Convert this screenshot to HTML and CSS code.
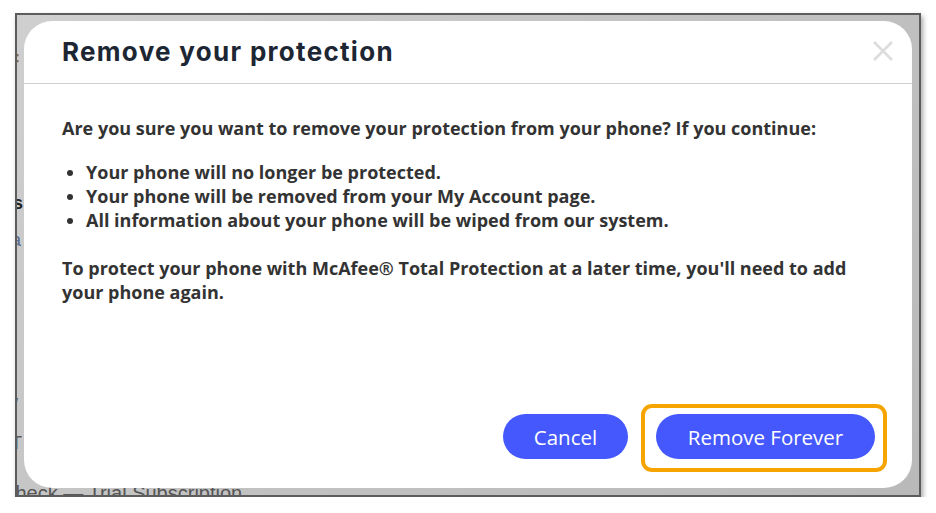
FILE: index.html
```html
<!DOCTYPE html>
<html lang="en">
<head>
<meta charset="utf-8">
<title>Remove your protection</title>
<link rel="stylesheet" href="styles.css">
</head>
<body>
<div class="frame">
  <div class="page">
    <div class="pg-line pg-f">f</div>
    <div class="pg-line pg-s">s</div>
    <div class="pg-line pg-a">a</div>
    <div class="pg-line pg-slash">/</div>
    <div class="pg-line pg-t">T</div>
    <div class="pg-line pg-bottom">Check — Trial Subscription</div>
  </div>
  <div class="modal" role="dialog" aria-labelledby="mtitle">
    <div class="modal-header">
      <h1 id="mtitle" class="modal-title">Remove your protection</h1>
      <button class="close" aria-label="Close">
        <svg width="22" height="22" viewBox="0 0 22 22"><path d="M2 2L20 20M20 2L2 20" stroke="#dcdcdc" stroke-width="2.6" fill="none"/></svg>
      </button>
    </div>
    <div class="modal-body">
      <p class="lead">Are you sure you want to remove your protection from your phone? If you continue:</p>
      <ul class="list">
        <li>Your phone will no longer be protected.</li>
        <li>Your phone will be removed from your My Account page.</li>
        <li>All information about your phone will be wiped from our system.</li>
      </ul>
      <p class="note">To protect your phone with McAfee® Total Protection at a later time, you'll need to add your phone again.</p>
    </div>
    <div class="modal-footer">
      <button class="btn">Cancel</button>
      <div class="highlight-wrap">
        <button class="btn btn-wide">Remove Forever</button>
        <span class="highlight"></span>
      </div>
    </div>
  </div>
</div>
</body>
</html>
```

FILE: styles.css
```css
html, body {
  margin: 0;
  padding: 0;
  background: #ffffff;
}

body {
  font-family: "Open Sans", "Liberation Sans", sans-serif;
}

.frame {
  position: relative;
  margin: 13px 0 0 15px;
  width: 906px;
  height: 484px;
  box-sizing: border-box;
  border: 2px solid #5c5c5c;
  background: linear-gradient(135deg, #cfcfcf 0%, #c2c2c2 50%, #b9b9b9 100%);
  box-shadow: 2px 3px 5px rgba(0, 0, 0, 0.35);
  overflow: hidden;
}

.page {
  display: flex;
  flex-direction: column;
  color: #4a4a4a;
  font-family: "Liberation Sans", sans-serif;
}

.pg-line {
  font-size: 18px;
  line-height: 20px;
  height: 20px;
  white-space: nowrap;
}

.pg-f { margin-top: 33px; color: #8a6a3a; margin-left: -8px; font-size: 34px; line-height: 36px; height: 36px; }
.pg-s { margin-top: 109px; color: #222; font-weight: 700; margin-left: -4px; }
.pg-a { margin-top: 17px; color: #5a6a90; margin-left: -6px; }
.pg-slash { margin-top: 145px; color: #5a5a5a; margin-left: -4px; }
.pg-t { margin-top: 18px; color: #5a5a5a; margin-left: -6px; }
.pg-bottom { margin-top: 30px; margin-left: -16px; font-size: 20px; color: #555; }

.modal {
  position: absolute;
  left: 7px;
  top: 6px;
  width: 888px;
  height: 467px;
  background: #ffffff;
  border-radius: 28px;
  display: flex;
  flex-direction: column;
  overflow: hidden;
}

.modal-header {
  height: 63px;
  box-sizing: border-box;
  border-bottom: 1px solid #cfcfcf;
  display: flex;
  align-items: center;
  justify-content: space-between;
  padding: 0 18px 0 38px;
}

.modal-title {
  margin: 0;
  font-family: "Inter", "Liberation Sans", sans-serif;
  font-weight: 700;
  font-size: 26px;
  letter-spacing: 1.3px;
  color: #1d2633;
  padding-bottom: 2px;
}

.close {
  border: 0;
  background: none;
  padding: 0;
  width: 22px;
  height: 22px;
  margin-top: -2px;
  display: flex;
}

.modal-body {
  flex: 1;
  padding: 32px 38px 0 38px;
  color: #333333;
  font-size: 18px;
  line-height: 24px;
  font-weight: 700;
}

.lead, .note {
  margin: 0;
}

.list {
  margin: 20px 0 24px 0;
  padding: 0 0 0 24px;
}

.modal-footer {
  display: flex;
  justify-content: flex-end;
  gap: 28px;
  padding: 0 37px 29px 0;
}

.btn {
  height: 45px;
  width: 125px;
  border: 0;
  border-radius: 23px;
  background: #4458fd;
  color: #ffffff;
  font-family: "Open Sans", "Liberation Sans", sans-serif;
  font-size: 20.5px;
  padding: 0;
}

.btn-wide {
  width: 219px;
}

.highlight-wrap {
  position: relative;
  display: flex;
}

.highlight {
  position: absolute;
  left: -15px;
  top: -10px;
  right: -12px;
  bottom: -13px;
  border: 4px solid #f8a400;
  border-radius: 11px;
  pointer-events: none;
}
```
